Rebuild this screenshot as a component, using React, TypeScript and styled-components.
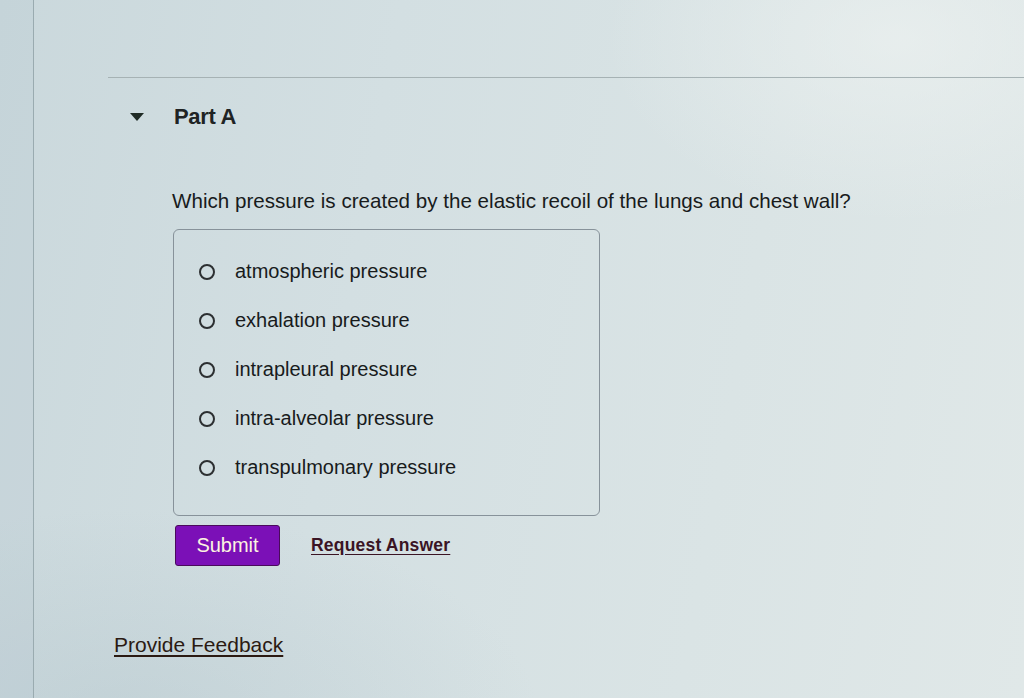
import React from "react";
import styled, { createGlobalStyle } from "styled-components";

const Global = createGlobalStyle`
  html, body { margin: 0; padding: 0; }
  body {
    width: 1024px;
    height: 698px;
    overflow: hidden;
    font-family: "Liberation Sans", Arial, sans-serif;
    color: #181b1c;
    background:
      radial-gradient(ellipse 420px 260px at 900px 40px, rgba(236,241,240,0.7), rgba(236,241,240,0) 70%),
      radial-gradient(ellipse 600px 300px at 120px 720px, rgba(175,194,201,0.4), rgba(175,194,201,0) 70%),
      linear-gradient(100deg, #cad8dc 0%, #d3dfe2 35%, #dae4e5 70%, #e0e8e8 100%);
  }
`;

const Page = styled.div`
  display: flex;
  height: 698px;
`;

const LeftStrip = styled.div`
  width: 33px;
  flex: none;
  border-right: 1px solid #9aabb0;
  background: rgba(175, 196, 203, 0.18);
`;

const Main = styled.main`
  flex: 1;
  padding-top: 77px;
  padding-left: 74px;
`;

const Section = styled.section`
  border-top: 1px solid #a6b2b4;
  padding-left: 22px;
`;

const Header = styled.div`
  display: flex;
  align-items: center;
  margin-top: 27px;
  height: 24px;
`;

const Caret = styled.span`
  width: 0;
  height: 0;
  border-left: 7px solid transparent;
  border-right: 7px solid transparent;
  border-top: 8px solid #1f2b25;
  margin-right: 30px;
`;

const PartTitle = styled.h2`
  margin: 0;
  font-size: 22px;
  line-height: 24px;
  font-weight: 700;
  color: #202324;
  letter-spacing: -0.3px;
`;

const Body = styled.div`
  padding-left: 42px;
`;

const Question = styled.p`
  margin: 60px 0 0;
  font-size: 20.6px;
  line-height: 24px;
`;

const OptionBox = styled.div`
  margin-top: 16px;
  width: 427px;
  box-sizing: border-box;
  height: 287px;
  border: 1px solid #87929a;
  border-radius: 6px;
  padding: 17px 0 0 25px;
  display: flex;
  flex-direction: column;
  margin-left: 1px;
`;

const Option = styled.label`
  display: flex;
  align-items: center;
  height: 49px;
  font-size: 20px;
  cursor: pointer;
`;

const Radio = styled.span`
  width: 16px;
  height: 16px;
  box-sizing: border-box;
  border: 2px solid #2c2f31;
  border-radius: 50%;
  margin-right: 20px;
  flex: none;
`;

const Actions = styled.div`
  display: flex;
  align-items: center;
  margin-top: 9px;
  margin-left: 3px;
  gap: 31px;
`;

const SubmitButton = styled.button`
  width: 105px;
  height: 41px;
  background: #7b10b7;
  border: 1px solid #4a0a5c;
  border-radius: 3px;
  color: #fbf4e0;
  font-family: "Liberation Sans", Arial, sans-serif;
  font-size: 20px;
  padding: 0;
`;

const RequestLink = styled.a`
  font-size: 17.5px;
  font-weight: 700;
  color: #3a1424;
  text-decoration: underline;
  text-underline-offset: 3px;
  letter-spacing: 0.2px;
`;

const Feedback = styled.a`
  display: block;
  margin-top: 67px;
  margin-left: -16px;
  font-size: 21px;
  line-height: 24px;
  color: #2b1a12;
  text-decoration: underline;
  text-underline-offset: 3px;
`;

const options = [
  "atmospheric pressure",
  "exhalation pressure",
  "intrapleural pressure",
  "intra-alveolar pressure",
  "transpulmonary pressure",
];

export default function App() {
  return (
    <>
      <Global />
      <Page>
        <LeftStrip />
        <Main>
          <Section>
            <Header>
              <Caret />
              <PartTitle>Part A</PartTitle>
            </Header>
            <Body>
              <Question>
                Which pressure is created by the elastic recoil of the lungs and chest wall?
              </Question>
              <OptionBox>
                {options.map((o) => (
                  <Option key={o}>
                    <Radio />
                    {o}
                  </Option>
                ))}
              </OptionBox>
              <Actions>
                <SubmitButton>Submit</SubmitButton>
                <RequestLink>Request Answer</RequestLink>
              </Actions>
            </Body>
            <Feedback>Provide Feedback</Feedback>
          </Section>
        </Main>
      </Page>
    </>
  );
}
